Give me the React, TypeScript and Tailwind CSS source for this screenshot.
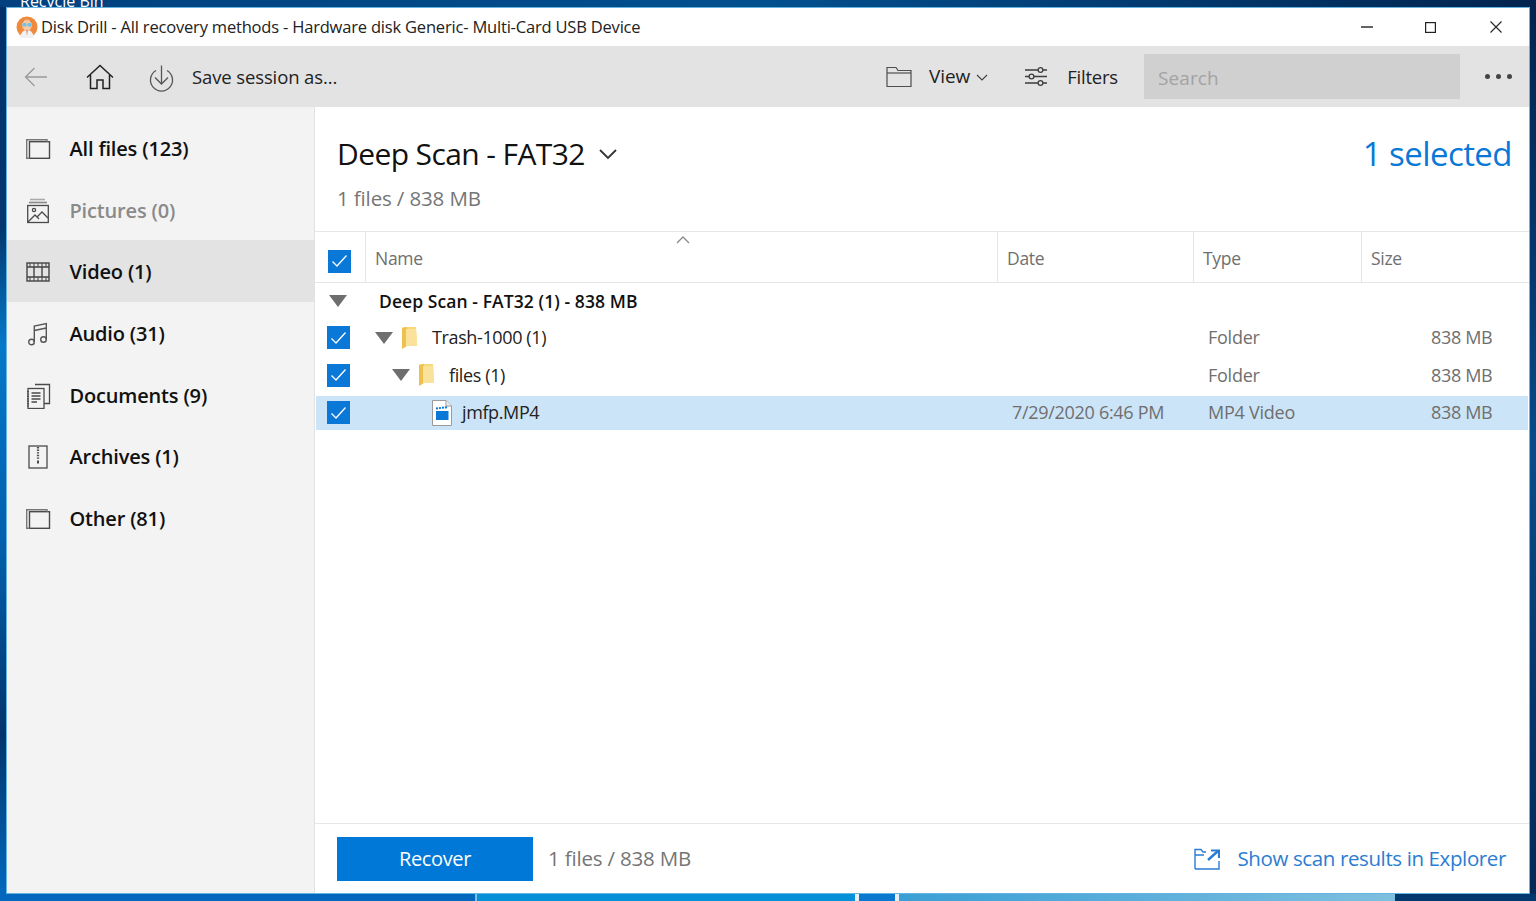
const FONT = "font-['Open_Sans','Noto_Sans',sans-serif]";

// line icons are hand drawn to follow the app's own glyphs
function Logo() {
  return (
    <svg width="22" height="22" viewBox="0 0 22 22" className="shrink-0">
      <circle cx="11" cy="11" r="10.5" fill="#ef8a3c" />
      <path d="M4 22 Q5 14 11 14 Q17 14 18 22 Z" fill="#f2f2f2" />
      <ellipse cx="11" cy="9" rx="5" ry="5.5" fill="#f6c9a4" />
      <path d="M5.5 7 Q11 1 16.5 7 L15 5 Q11 3.5 7 5 Z" fill="#a8551e" />
      <rect x="6.5" y="7" width="4" height="3.4" rx="1.2" fill="#6fc3e8" />
      <rect x="11.5" y="7" width="4" height="3.4" rx="1.2" fill="#6fc3e8" />
      <path d="M10.5 14 L11 20 L11.5 14 Z" fill="#c0392b" />
    </svg>
  );
}

function Stacked() {
  return (
    <svg width="26" height="22" viewBox="0 0 26 22" fill="none" stroke="#4a4a4a" strokeWidth="1.4">
      <rect x="4.5" y="3.7" width="20" height="16.6" />
      <path d="M4.5 20.3 H1.7 V1.7 H22 V3.7" stroke="#777" />
    </svg>
  );
}

function PictureIcon() {
  return (
    <svg width="24" height="26" viewBox="0 0 24 26" fill="none" stroke="#4a4a4a" strokeWidth="1.3">
      <path d="M4 1.5 H19" stroke="#aaa" strokeWidth="1.6" />
      <path d="M3 4.5 H21" stroke="#888" strokeWidth="1.6" />
      <rect x="1.7" y="7.5" width="20.6" height="17" />
      <circle cx="8" cy="12" r="1.6" />
      <path d="M2 24 L9 17 L13 21 M11 19 L16 14 L22 20" />
    </svg>
  );
}

function FilmIcon() {
  return (
    <svg width="24" height="20" viewBox="0 0 24 20" fill="none" stroke="#444" strokeWidth="1.4">
      <rect x="1" y="1" width="22" height="18" />
      <path d="M1 5 H23 M1 15 H23 M8 5 V15 M16 5 V15" />
      <path d="M4 1 V5 M8 1 V5 M12 1 V5 M16 1 V5 M20 1 V5 M4 15 V19 M8 15 V19 M12 15 V19 M16 15 V19 M20 15 V19" strokeWidth="1" />
    </svg>
  );
}

function MusicIcon() {
  return (
    <svg width="22" height="24" viewBox="0 0 22 24" fill="none" stroke="#555" strokeWidth="1.4">
      <circle cx="4.5" cy="20" r="2.8" />
      <circle cx="16.5" cy="17.5" r="2.8" />
      <path d="M7.3 20 V4 L19.3 1.5 V17.5 M7.3 8.5 L19.3 6" />
    </svg>
  );
}

function DocsIcon() {
  return (
    <svg width="25" height="26" viewBox="0 0 25 26" fill="none" stroke="#4a4a4a" strokeWidth="1.3">
      <path d="M9 1.5 H23.5 V20.5 H18" />
      <rect x="2" y="5.5" width="16" height="20" fill="#f3f3f3" />
      <path d="M5.5 10 H14.5 M5.5 13 H14.5 M5.5 16 H14.5 M5.5 19 H11" />
      <path d="M2 8 V24" strokeDasharray="1.2 1.2" strokeWidth="2" />
    </svg>
  );
}

function ZipIcon() {
  return (
    <svg width="20" height="24" viewBox="0 0 20 24" fill="none" stroke="#4a4a4a" strokeWidth="1.3">
      <rect x="1" y="1" width="18" height="22" />
      <path d="M10 2 V15" strokeDasharray="1.4 1.2" strokeWidth="2.2" />
      <rect x="9" y="15.5" width="2" height="3" fill="#4a4a4a" stroke="none" />
    </svg>
  );
}

function FolderLine() {
  return (
    <svg width="26" height="22" viewBox="0 0 26 22" fill="none" stroke="#4d4d4d" strokeWidth="1.2">
      <path d="M1 20.5 V1.5 H10 L12 4.5 H25 V20.5 Z" />
      <path d="M1 7 H25" />
    </svg>
  );
}

function FiltersIcon() {
  return (
    <svg width="24" height="21" viewBox="0 0 24 21" fill="none" stroke="#3d3d3d" strokeWidth="1.3">
      <path d="M1 4 H14 M19 4 H23 M1 10.5 H5 M10 10.5 H23 M1 17 H14 M19 17 H23" />
      <circle cx="16.5" cy="4" r="2.4" />
      <circle cx="7.5" cy="10.5" r="2.4" />
      <circle cx="16.5" cy="17" r="2.4" />
    </svg>
  );
}

function Checkbox() {
  return (
    <span className="flex h-[23px] w-[23px] shrink-0 items-center justify-center bg-[#0a78d7]">
      <svg width="17" height="14" viewBox="0 0 17 14" fill="none" stroke="#fff" strokeWidth="1.3">
        <path d="M1.5 7.5 L6 12 L15.5 1.5" />
      </svg>
    </span>
  );
}

function Triangle() {
  return <span className="h-0 w-0 shrink-0 border-x-[9px] border-t-[12px] border-x-transparent border-t-[#6e6e6e]" />;
}

function YellowFolder() {
  return (
    <svg width="17" height="24" viewBox="0 0 17 24" className="shrink-0">
      <path d="M1 2 L3 1 H15 L16 20 H3 L1 23 Z" fill="#f8d775" />
      <path d="M1 2 L6 1 V20 L1 23 Z" fill="#edc04f" />
      <path d="M5 3 H15 L16 20 H5 Z" fill="#fbe29a" />
    </svg>
  );
}

function VideoFile() {
  return (
    <svg width="20" height="26" viewBox="0 0 20 26" className="shrink-0">
      <path d="M.5.5 H14 L19.5 6 V25.5 H.5 Z" fill="#fff" stroke="#9a9a9a" />
      <path d="M14 .5 V6 H19.5" fill="#eee" stroke="#9a9a9a" />
      <rect x="4" y="11" width="12.5" height="9" fill="#0a78d7" />
      <path d="M4 8.5 L16 7" stroke="#0a78d7" strokeWidth="2" strokeDasharray="2 1" />
    </svg>
  );
}

function ExplorerIcon() {
  return (
    <svg width="26" height="22" viewBox="0 0 26 22" fill="none" stroke="#2b7cd3" strokeWidth="1.4">
      <path d="M1 21 V1.5 H7 L9 4 H12 M1 7 H10 M1 21 H25 V13" />
      <path d="M14 12 L24 3" strokeWidth="2.4" />
      <path d="M17 2.5 H25 V10" strokeWidth="2.2" />
    </svg>
  );
}

const categories = [
  { label: 'All files (123)', icon: <Stacked /> },
  { label: 'Pictures (0)', icon: <PictureIcon />, dim: true },
  { label: 'Video (1)', icon: <FilmIcon />, active: true },
  { label: 'Audio (31)', icon: <MusicIcon /> },
  { label: 'Documents (9)', icon: <DocsIcon /> },
  { label: 'Archives (1)', icon: <ZipIcon /> },
  { label: 'Other (81)', icon: <Stacked /> },
];

function Sidebar() {
  return (
    <aside className="w-[308px] shrink-0 border-r border-[#e2e2e2] bg-[#f3f3f3] pt-[10px]">
      {categories.map((c) => (
        <div key={c.label} className={`flex h-[61.6px] items-center pt-[3px] ${c.active ? 'bg-[#e3e3e3]' : ''}`}>
          <span className="flex w-[62.5px] shrink-0 justify-center">{c.icon}</span>
          <span className={`text-[20px] font-semibold tracking-[-0.17px] ${c.dim ? 'text-[#8a8a8a]' : 'text-[#111]'}`}>{c.label}</span>
        </div>
      ))}
    </aside>
  );
}

function HeaderCell({ label, className }: { label: string; className: string }) {
  return <div className={`flex items-center border-r border-[#e6e6e6] pl-[9px] pt-[2px] text-[17.5px] tracking-[-0.3px] text-[#6f6f6f] ${className}`}>{label}</div>;
}

const rows = [
  { name: 'Trash-1000 (1)', indent: 'pl-[25px]', type: 'Folder', folder: true },
  { name: 'files (1)', indent: 'pl-[42px]', type: 'Folder', folder: true },
  { name: 'jmfp.MP4', date: '7/29/2020 6:46 PM', type: 'MP4 Video', indent: 'pl-[82px]', selected: true },
];

function FileTable() {
  return (
    <div className="flex-1">
      <div className="relative flex h-[52px] border-y border-[#e6e6e6]">
        <div className="flex w-[51px] items-center justify-center border-r border-[#e6e6e6] pr-[1px] pt-[8px]">
          <Checkbox />
        </div>
        <HeaderCell label="Name" className="w-[632px]" />
        <HeaderCell label="Date" className="w-[196px]" />
        <HeaderCell label="Type" className="w-[168px]" />
        <div className="flex flex-1 items-center pl-[9px] pt-[2px] text-[17.5px] tracking-[-0.3px] text-[#6f6f6f]">Size</div>
        <svg width="14" height="8" viewBox="0 0 14 8" fill="none" stroke="#8a8a8a" strokeWidth="1.3" className="absolute left-[361px] top-[4px]">
          <path d="M1 7 L7 1 L13 7" />
        </svg>
      </div>
      <div className="flex h-[36px] items-center pl-[14px]">
        <Triangle />
        <span className="ml-[32px] text-[17.5px] font-semibold tracking-[0.08px] text-[#111]">Deep Scan - FAT32 (1) - 838 MB</span>
      </div>
      {rows.map((r) => (
        <div
          key={r.name}
          className={`flex items-center ${r.selected ? 'mx-[1px] my-[1.75px] h-[34px] bg-[#cce4f7] pl-[11px]' : 'h-[37.5px] pl-[12px]'}`}
        >
          <Checkbox />
          <div className={`flex w-[654px] items-center ${r.indent}`}>
            {r.folder && <Triangle />}
            {r.folder ? <span className="ml-[8px]"><YellowFolder /></span> : <VideoFile />}
            <span className={`${r.folder ? 'ml-[14px]' : 'ml-[10px]'} text-[18px] tracking-[-0.38px] text-[#222]`}>{r.name}</span>
          </div>
          <span className="w-[204px] pl-[8px] text-[18px] tracking-[-0.3px] text-[#6f6f6f]">{r.date}</span>
          <span className="w-[223px] text-[18px] tracking-[-0.25px] text-[#6f6f6f]">{r.type}</span>
          <span className="text-[18px] tracking-[-0.35px] text-[#6f6f6f]">838 MB</span>
        </div>
      ))}
    </div>
  );
}

export default function App() {
  return (
    <div className={`flex h-[901px] w-[1536px] flex-col overflow-hidden bg-[#03356c] ${FONT}`}>
      {/* desktop behind the window */}
      <div className="h-[7px] shrink-0 overflow-hidden bg-[linear-gradient(90deg,#02407f,#03508f_50%,#02244f)] pl-[20px] text-[16px] leading-[3px] text-white">Recycle Bin</div>
      <div className="flex min-h-0 flex-1">
        <div className="w-[6px] shrink-0 bg-[linear-gradient(180deg,#03306a_0%,#03386f_25%,#0478c8_38%,#0360ae_60%,#03356c_82%,#0368bd_100%)]" />
        <div className="flex min-w-0 flex-1 flex-col border border-[#63b4e0] bg-white">
          <div className="flex h-[38px] shrink-0 items-center pl-[9px]">
            <Logo />
            <span className="ml-[3px] flex-1 text-[16.5px] tracking-[-0.19px] text-[#222]">Disk Drill - All recovery methods - Hardware disk Generic- Multi-Card USB Device</span>
            <div className="flex items-center pr-[27px]">
              <svg width="12" height="2" viewBox="0 0 12 2" stroke="#222" strokeWidth="1.4"><path d="M0 1 H12" /></svg>
              <svg width="11" height="11" viewBox="0 0 11 11" fill="none" stroke="#222" strokeWidth="1.2" className="ml-[52px]"><rect x=".6" y=".6" width="9.8" height="9.8" /></svg>
              <svg width="12" height="12" viewBox="0 0 12 12" fill="none" stroke="#222" strokeWidth="1.1" className="ml-[54px]"><path d="M.5 .5 L11.5 11.5 M11.5 .5 L.5 11.5" /></svg>
            </div>
          </div>
          <div className="flex h-[61px] shrink-0 items-center bg-[#e3e3e3] pr-[17px]">
            <svg width="24" height="20" viewBox="0 0 24 20" fill="none" stroke="#9a9a9a" strokeWidth="1.3" className="ml-[17px]">
              <path d="M23 10 H1.5 M10.5 1 L1.5 10 L10.5 19" />
            </svg>
            <svg width="28" height="26" viewBox="0 0 28 26" fill="none" stroke="#222" strokeWidth="1.5" className="ml-[38px]">
              <path d="M1 13.5 L14 1.5 L27 13.5 M4.5 11 V24.5 H11 V16 H17 V24.5 H23.5 V11" />
            </svg>
            <svg width="25" height="27" viewBox="0 0 25 27" fill="none" stroke="#555" strokeWidth="1.3" className="ml-[35px] mt-[3px]">
              <path d="M7 5.5 A11 11 0 1 0 18 5.5" />
              <path d="M12.5 0.5 V19 M6 12.5 L12.5 19 L19 12.5" />
            </svg>
            <span className="ml-[18px] flex-1 text-[18.5px] tracking-[-0.12px] text-[#222]">Save session as...</span>
            <FolderLine />
            <span className="ml-[17px] text-[19px] tracking-[-0.1px] text-[#222]">View</span>
            <svg width="12" height="7" viewBox="0 0 12 7" fill="none" stroke="#444" strokeWidth="1.2" className="ml-[6px] mt-[2px]">
              <path d="M1 1 L6 6 L11 1" />
            </svg>
            <span className="ml-[36px]"><FiltersIcon /></span>
            <span className="ml-[19px] text-[18.5px] tracking-[-0.2px] text-[#222]">Filters</span>
            <div className="ml-[26px] flex h-[45px] w-[316px] items-center bg-[#d0d0d0] pl-[14px] pt-[3px] text-[19px] tracking-[0.1px] text-[#a3a3a3]">Search</div>
            <div className="ml-[25px] flex gap-[6px]">
              <span className="h-[5px] w-[5px] rounded-full bg-[#444]" />
              <span className="h-[5px] w-[5px] rounded-full bg-[#444]" />
              <span className="h-[5px] w-[5px] rounded-full bg-[#444]" />
            </div>
          </div>
          <div className="flex min-h-0 flex-1">
            <Sidebar />
            <main className="flex min-w-0 flex-1 flex-col">
              <div className="flex h-[124px] shrink-0 justify-between pl-[22px] pr-[17px]">
                <div>
                  <div className="mt-[25px] flex items-center">
                    <h1 className="text-[30px] leading-[44px] font-medium tracking-[-0.6px] text-[#111]">Deep Scan - FAT32</h1>
                    <svg width="18" height="11" viewBox="0 0 18 11" fill="none" stroke="#333" strokeWidth="1.8" className="ml-[14px]">
                      <path d="M1 1 L9 9 L17 1" />
                    </svg>
                  </div>
                  <p className="mt-[10px] text-[20.5px] leading-[24px] tracking-[-0.13px] text-[#757575]">1 files / 838 MB</p>
                </div>
                <div className="mt-[25px] text-[33px] leading-[44px] tracking-[-0.55px] text-[#0a78d7]">1 selected</div>
              </div>
              <FileTable />
              <div className="flex h-[70px] shrink-0 items-center border-t border-[#e6e6e6] pl-[22px] pr-[23px]">
                <button className="mt-[1px] h-[44px] w-[196px] bg-[#0078d7] text-[20px] tracking-[-0.35px] text-white">Recover</button>
                <span className="ml-[15px] flex-1 text-[20.5px] tracking-[-0.18px] text-[#757575]">1 files / 838 MB</span>
                <ExplorerIcon />
                <span className="ml-[17px] text-[20.5px] tracking-[-0.38px] text-[#2b7cd3]">Show scan results in Explorer</span>
              </div>
            </main>
          </div>
        </div>
        <div className="w-[6px] shrink-0 bg-[linear-gradient(180deg,#02244f_0%,#03396f_30%,#064d8c_50%,#03396f_75%,#022a58_100%)]" />
      </div>
      {/* taskbar edge */}
      <div className="flex h-[7px] shrink-0">
        <div className="w-[475px] bg-[#0368bd]" />
        <div className="w-[380px] border-l-2 border-[#7cc0e4] bg-[#0690d8]" />
        <div className="w-[40px] border-l-4 border-[#e8eef2] bg-[#0a78cf]" />
        <div className="w-[500px] border-l-4 border-[#e8eef2] bg-[linear-gradient(90deg,#3a9fd6,#7fbfdf)]" />
        <div className="flex-1 bg-[#03386e]" />
      </div>
    </div>
  );
}
